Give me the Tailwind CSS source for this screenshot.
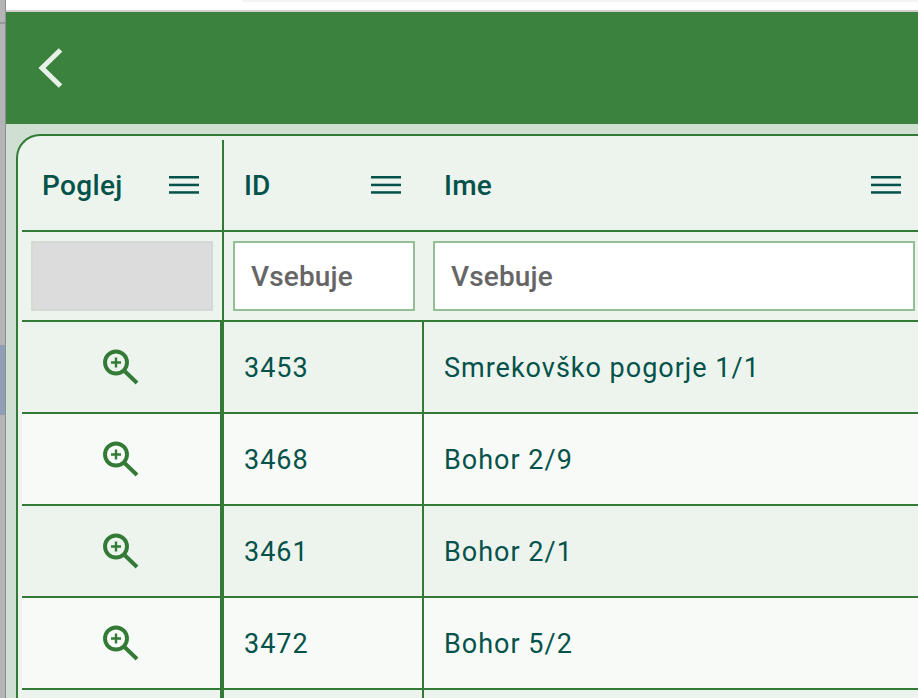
<!DOCTYPE html>
<html lang="en">
<head>
  <meta charset="UTF-8" />
  <title>Poglej</title>
  <script src="https://cdn.jsdelivr.net/npm/@tailwindcss/browser@4"></script>
</head>
<body class="w-[918px] h-[698px] overflow-hidden bg-white flex font-['Roboto',sans-serif]">

  <!-- strip of the window behind -->
  <div class="w-[6px] h-full shrink-0 flex flex-col bg-[#b4b4b6] border-r border-[#8f8f92]">
    <div class="h-[22px]"></div>
    <div class="h-[2px] bg-[#97979a]"></div>
    <div class="h-[321px]"></div>
    <div class="h-[70px] bg-[#8f9db5]"></div>
  </div>

  <div class="flex-1 min-w-0 flex flex-col">
    <div class="h-[12px] shrink-0 bg-white border-b-2 border-[#cfcfcf] pl-[236px]">
      <div class="h-[2px] bg-[#f3f3f3] rounded-bl-[6px]"></div>
    </div>

    <header class="h-[112px] shrink-0 bg-[#3b823f] flex items-center pl-[30px]">
      <svg width="28" height="44" viewBox="0 0 28 44" fill="none" stroke="#e8f1e8" stroke-width="5"><path d="M24.5 4 L6 22 L24.5 40" /></svg>
    </header>

    <main class="flex-1 min-h-0 bg-[#cfe0d3] pt-[10px] pl-[10px]">
      <div class="h-full bg-[#edf4ee] border-t-2 border-l-2 border-[#337a36] rounded-tl-[24px] overflow-hidden text-[#04524a]">

        <!-- column titles -->
        <div class="h-[96px] pt-[4px] ml-[4px] flex border-b-2 border-[#337a36]">
          <div class="w-[202px] shrink-0 border-r-2 border-[#337a36] flex items-center justify-between pl-[20px] pr-[23px]">
            <span class="text-[28px] font-medium tracking-[0.35px] translate-y-[1px]">Poglej</span>
            <svg width="30" height="20" viewBox="0 0 30 20" fill="#04524a"><rect y="1" width="30" height="2.5"/><rect y="8.7" width="30" height="2.5"/><rect y="16.2" width="30" height="2.5"/></svg>
          </div>
          <div class="w-[200px] shrink-0 flex items-center justify-between pl-[20px] pr-[23px]">
            <span class="text-[28px] font-medium translate-y-[1px]">ID</span>
            <svg width="30" height="20" viewBox="0 0 30 20" fill="#04524a"><rect y="1" width="30" height="2.5"/><rect y="8.7" width="30" height="2.5"/><rect y="16.2" width="30" height="2.5"/></svg>
          </div>
          <div class="flex-1 flex items-center justify-between pl-[20px] pr-[17px]">
            <span class="text-[28px] font-medium tracking-[0.2px] translate-y-[1px]">Ime</span>
            <svg width="30" height="20" viewBox="0 0 30 20" fill="#04524a"><rect y="1" width="30" height="2.5"/><rect y="8.7" width="30" height="2.5"/><rect y="16.2" width="30" height="2.5"/></svg>
          </div>
        </div>

        <!-- filters -->
        <div class="h-[90px] ml-[4px] flex border-b-2 border-[#337a36]">
          <div class="w-[202px] shrink-0 border-r-2 border-[#337a36] pl-[9px] pr-[9px] flex items-center">
            <div class="w-full h-[70px] bg-[#dcdcdc] border-2 border-[#d3d9d5]"></div>
          </div>
          <div class="w-[200px] shrink-0 pl-[9px] flex items-center">
            <div class="w-[182px] h-[70px] bg-white border-2 border-[#93bd94] pl-[16px] pt-[2px] flex items-center text-[28px] font-medium tracking-[0.15px] text-[#666666]">Vsebuje</div>
          </div>
          <div class="flex-1 pl-[9px] flex items-center">
            <div class="w-[482px] h-[70px] bg-white border-2 border-[#93bd94] pl-[16px] pt-[2px] flex items-center text-[28px] font-medium tracking-[0.15px] text-[#666666]">Vsebuje</div>
          </div>
        </div>

        <!-- rows -->
        <div class="h-[92px] ml-[4px] flex border-b-2 border-[#337a36] bg-[#edf4ee] text-[27px] tracking-[1px]">
          <div class="w-[202px] shrink-0 border-r-4 border-[#337a36] flex items-center justify-center">
            <svg width="36" height="36" viewBox="0 0 36 36" fill="none" stroke="#337a36"><circle cx="13" cy="13.5" r="11" stroke-width="3.9"/><path d="M21.5 22 L34 34" stroke-width="3.9"/><path d="M8 13.5h10M13 8.5v10" stroke-width="2.4"/></svg>
          </div>
          <div class="w-[200px] shrink-0 border-r-2 border-[#337a36] flex items-center pl-[20px] pt-[3px]">3453</div>
          <div class="flex-1 flex items-center pl-[20px] pt-[3px]">Smrekovško pogorje 1/1</div>
        </div>
        <div class="h-[92px] ml-[4px] flex border-b-2 border-[#337a36] bg-[#f7faf7] text-[27px] tracking-[1px]">
          <div class="w-[202px] shrink-0 border-r-4 border-[#337a36] flex items-center justify-center">
            <svg width="36" height="36" viewBox="0 0 36 36" fill="none" stroke="#337a36"><circle cx="13" cy="13.5" r="11" stroke-width="3.9"/><path d="M21.5 22 L34 34" stroke-width="3.9"/><path d="M8 13.5h10M13 8.5v10" stroke-width="2.4"/></svg>
          </div>
          <div class="w-[200px] shrink-0 border-r-2 border-[#337a36] flex items-center pl-[20px] pt-[3px]">3468</div>
          <div class="flex-1 flex items-center pl-[20px] pt-[3px]">Bohor 2/9</div>
        </div>
        <div class="h-[92px] ml-[4px] flex border-b-2 border-[#337a36] bg-[#edf4ee] text-[27px] tracking-[1px]">
          <div class="w-[202px] shrink-0 border-r-4 border-[#337a36] flex items-center justify-center">
            <svg width="36" height="36" viewBox="0 0 36 36" fill="none" stroke="#337a36"><circle cx="13" cy="13.5" r="11" stroke-width="3.9"/><path d="M21.5 22 L34 34" stroke-width="3.9"/><path d="M8 13.5h10M13 8.5v10" stroke-width="2.4"/></svg>
          </div>
          <div class="w-[200px] shrink-0 border-r-2 border-[#337a36] flex items-center pl-[20px] pt-[3px]">3461</div>
          <div class="flex-1 flex items-center pl-[20px] pt-[3px]">Bohor 2/1</div>
        </div>
        <div class="h-[92px] ml-[4px] flex border-b-2 border-[#337a36] bg-[#f7faf7] text-[27px] tracking-[1px]">
          <div class="w-[202px] shrink-0 border-r-4 border-[#337a36] flex items-center justify-center">
            <svg width="36" height="36" viewBox="0 0 36 36" fill="none" stroke="#337a36"><circle cx="13" cy="13.5" r="11" stroke-width="3.9"/><path d="M21.5 22 L34 34" stroke-width="3.9"/><path d="M8 13.5h10M13 8.5v10" stroke-width="2.4"/></svg>
          </div>
          <div class="w-[200px] shrink-0 border-r-2 border-[#337a36] flex items-center pl-[20px] pt-[3px]">3472</div>
          <div class="flex-1 flex items-center pl-[20px] pt-[3px]">Bohor 5/2</div>
        </div>
        <div class="h-[8px] ml-[4px] flex bg-[#edf4ee]">
          <div class="w-[202px] shrink-0 border-r-4 border-[#337a36]"></div>
          <div class="w-[200px] shrink-0 border-r-2 border-[#337a36]"></div>
        </div>
      </div>
    </main>
  </div>
</body>
</html>
